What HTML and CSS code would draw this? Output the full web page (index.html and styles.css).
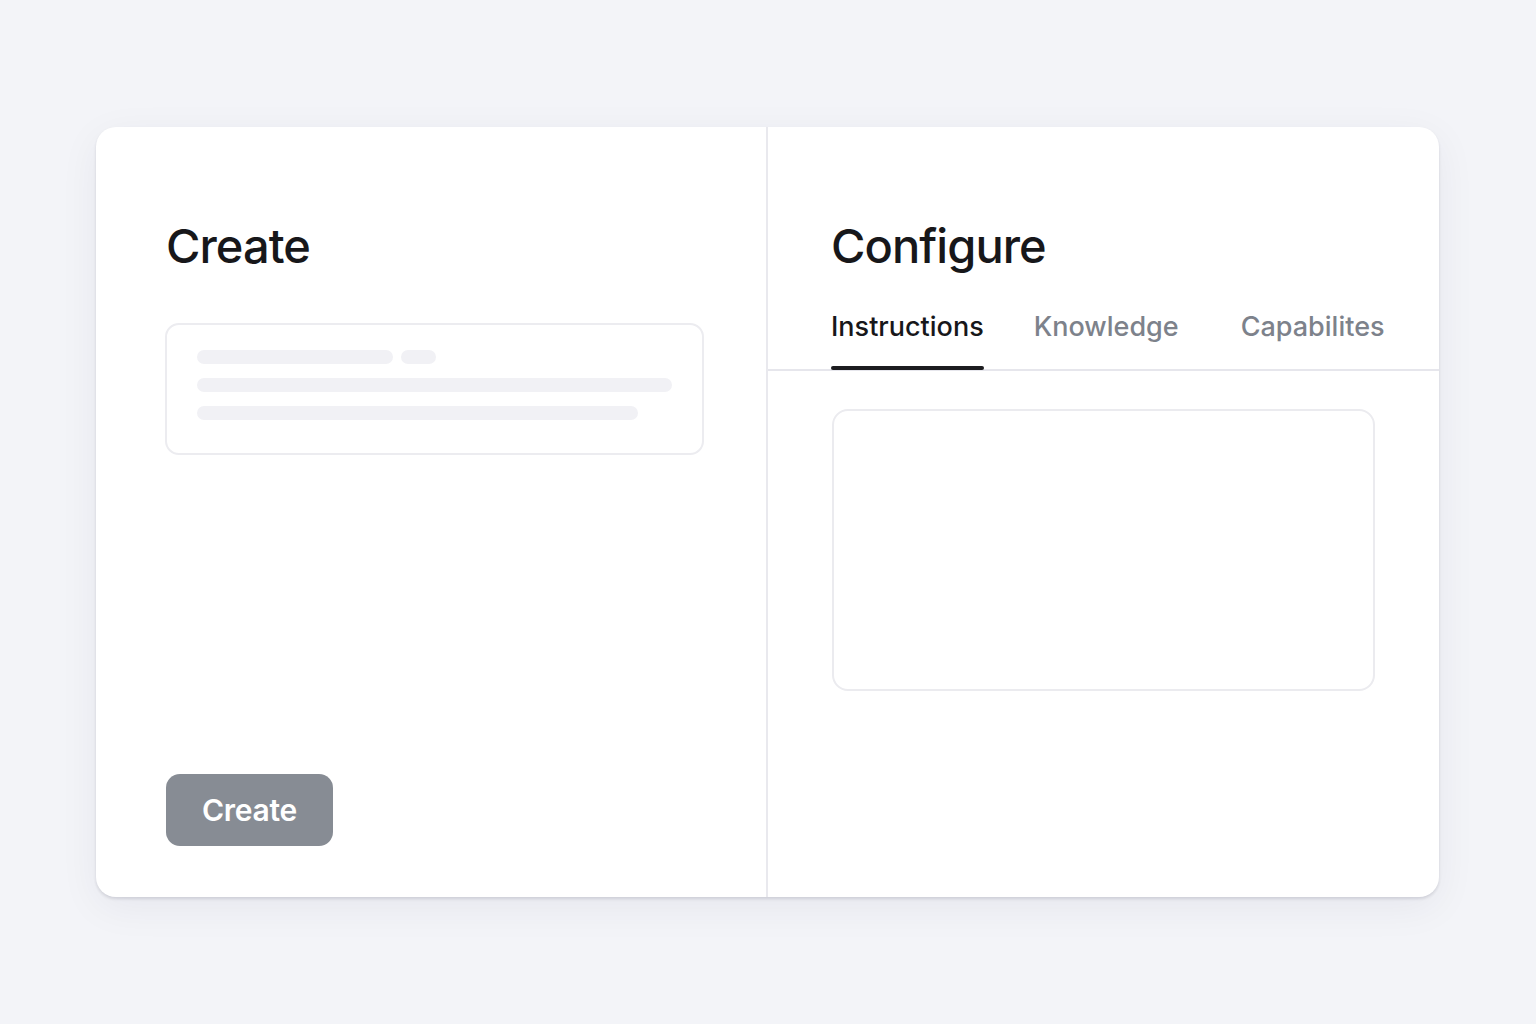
FILE: index.html
```html
<!DOCTYPE html>
<html lang="en">
<head>
    <meta charset="UTF-8">
    <meta name="viewport" content="width=device-width, initial-scale=1.0">
    <title>Create / Configure</title>
    <link rel="stylesheet" href="styles.css">
</head>
<body>
    <div class="card">
        <section class="panel panel-create">
            <h1>Create</h1>
            <div class="preview">
                <div class="line">
                    <span class="bar" style="width: 196px;"></span>
                    <span class="bar" style="width: 35px;"></span>
                </div>
                <div class="line">
                    <span class="bar" style="width: 476px;"></span>
                </div>
                <div class="line">
                    <span class="bar" style="width: 441px;"></span>
                </div>
            </div>
            <div class="spacer"></div>
            <button class="btn">Create</button>
        </section>
        <section class="panel panel-configure">
            <h1>Configure</h1>
            <div class="tabs">
                <div class="tab active">Instructions</div>
                <div class="tab">Knowledge</div>
                <div class="tab">Capabilites</div>
            </div>
            <div class="editor"></div>
        </section>
    </div>
</body>
</html>
```

FILE: styles.css
```css
body {
    margin: 0;
    height: 100vh;
    background-color: #f3f4f8;
    font-family: Inter, "Noto Sans", Arial, sans-serif;
    color: #17171a;
    display: flex;
    align-items: flex-start;
}

.card {
    margin: 127px 0 0 96px;
    width: 1343px;
    height: 770px;
    background-color: #ffffff;
    border-radius: 20px;
    box-shadow: 0 2px 3px rgba(20, 20, 40, 0.12), 0 10px 40px rgba(20, 20, 60, 0.06);
    display: flex;
    overflow: hidden;
}

.panel {
    display: flex;
    flex-direction: column;
    box-sizing: border-box;
    min-width: 0;
}

.panel h1 {
    margin: 0;
    font-size: 47px;
    font-weight: 500;
    letter-spacing: -0.02em;
    line-height: 58px;
}

.panel-create {
    width: 672px;
    flex-shrink: 0;
    padding: 90px 62px 51px 69px;
    border-right: 2px solid #e9e9ee;
}

.panel-create h1 {
    padding-left: 1px;
}

.preview {
    margin-top: 48px;
    height: 132px;
    box-sizing: border-box;
    border: 2px solid #ececf0;
    border-radius: 14px;
    padding: 25px 30px;
    display: flex;
    flex-direction: column;
    gap: 14px;
}

.line {
    display: flex;
    gap: 8px;
}

.bar {
    height: 14px;
    border-radius: 7px;
    background-color: #f1f1f5;
}

.spacer {
    flex: 1;
}

.btn {
    align-self: flex-start;
    margin-left: 1px;
    width: 167px;
    height: 72px;
    border: none;
    border-radius: 14px;
    background-color: #878c94;
    color: #ffffff;
    font-family: inherit;
    font-size: 30px;
    font-weight: 600;
    letter-spacing: -0.01em;
}

.panel-configure {
    flex: 1;
    padding: 90px 64px 0 63px;
}

.tabs {
    display: flex;
    margin: 35px -64px 0 -63px;
    padding: 0 63px;
    border-bottom: 2px solid #e6e6ec;
}

.tab {
    font-size: 27px;
    font-weight: 500;
    color: #7d828b;
    padding-bottom: 26px;
    position: relative;
    white-space: nowrap;
}

.tab + .tab {
    margin-left: 50px;
}

.tab:last-child {
    margin-left: 62px;
}

.tab.active {
    color: #17171a;
}

.tab.active::after {
    content: "";
    position: absolute;
    left: 0;
    right: 0;
    bottom: -1px;
    height: 4px;
    border-radius: 2px;
    background-color: #1c1c1f;
}

.editor {
    margin: 38px 0 0 1px;
    height: 282px;
    box-sizing: border-box;
    border: 2px solid #ebebef;
    border-radius: 16px;
}
```
